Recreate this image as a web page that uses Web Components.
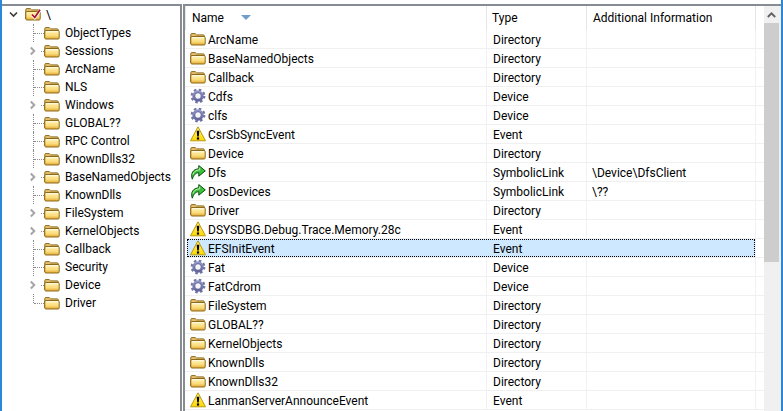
<!DOCTYPE html>
<html><head><meta charset="utf-8"><style>
html,body{margin:0;padding:0;background:#fff}
body{width:783px;height:411px;overflow:hidden;font:12px Roboto,"Open Sans",sans-serif;color:#000}
</style></head><body>
<x-app></x-app>
<script>
const folderBody=(id)=>`<defs><linearGradient id="${id}" x1="0" y1="0" x2="0" y2="1"><stop offset="0" stop-color="#fff3b8"/><stop offset=".6" stop-color="#fbdc7c"/><stop offset="1" stop-color="#e2a832"/></linearGradient></defs>`;
const ICONS={
folder:`<svg width="16" height="16" viewBox="0 0 16 16">${folderBody('fg')}<path d="M.8 13V3.600q0-1 1-1h3.400l1.300 1.300h6.800q1 0 1 1V6.500H.8z" fill="#e6c070" stroke="#8c6a1a"/><rect x=".8" y="5.500" width="14.400" height="8.500" rx="1.200" fill="url(#fg)" stroke="#8c6a1a"/><path d="M2 6.700h12" stroke="#fffbe6"/></svg>`,
gear:`<svg width="16" height="16" viewBox="0 0 16 16"><defs><linearGradient id="gg" x1="0" y1="0" x2="0" y2="1"><stop offset="0" stop-color="#9a9dca"/><stop offset="1" stop-color="#5c6098"/></linearGradient></defs><circle cx="8" cy="8" r="6.200" fill="none" stroke="#7175aa" stroke-width="2.400" stroke-dasharray="2.500 2.370"/><circle cx="8" cy="8" r="5.700" fill="url(#gg)"/><circle cx="8" cy="8" r="3.300" fill="#f4f4fa" stroke="#4f5388" stroke-width=".8"/></svg>`,
warn:`<svg width="16" height="16" viewBox="0 0 16 16"><defs><linearGradient id="wg" x1="0" y1="0" x2="0" y2="1"><stop offset="0" stop-color="#fff27a"/><stop offset="1" stop-color="#ffd800"/></linearGradient></defs><path d="M8 .8L15.500 14.800H.5z" fill="url(#wg)" stroke="#b89a10" stroke-linejoin="round"/><path d="M6.700 4.800h2.600l-.5 5.800H7.200z" fill="#000"/><rect x="6.900" y="11.400" width="2.200" height="2.200" fill="#000"/></svg>`,
link:`<svg width="16" height="16" viewBox="0 0 16 16"><path d="M2.300 15.200C.3 9.500 3 5.200 8.800 4.800V1.600l6.500 5.300-6.500 5.300V8.700C5.600 8.700 3.700 11 2.300 15.200z" fill="#3cc03c" stroke="#0a4f10" stroke-linejoin="round"/><path d="M2.900 10.500C3.600 7.800 6 5.900 9.700 5.800V3.600" fill="none" stroke="#c4f5b0" stroke-width="1"/></svg>`,
root:`<svg width="18" height="16" viewBox="0 0 18 16">${folderBody('rg')}<path d="M.8 12V2.600q0-1 1-1h3.400l1.300 1.300h6.800q1 0 1 1V5.500H.8z" fill="#e6c070" stroke="#8c6a1a"/><rect x=".8" y="4.500" width="14.400" height="8.500" rx="1.200" fill="url(#rg)" stroke="#8c6a1a"/><path d="M7 8L9.800 11 15 3.200" fill="none" stroke="#fff" stroke-width="2.600"/><path d="M7 7.500L9.800 10.500 15 2.800" fill="none" stroke="#a80f2c" stroke-width="1.700"/></svg>`
};
class XIcon extends HTMLElement{connectedCallback(){
 const s=this.shadowRoot||this.attachShadow({mode:'open'});
 s.innerHTML=`<style>:host{display:inline-flex;flex:none}svg{display:block}</style>`+ICONS[this.getAttribute('name')];
}}
customElements.define('x-icon',XIcon);

const ttpl=document.createElement('template');
ttpl.innerHTML=`<style>
:host{display:flex;align-items:center;height:18px;position:relative;white-space:nowrap}
.arrow{width:12px;height:18px;margin-left:27px;flex:none;display:flex;align-items:center;justify-content:flex-start}
.v{position:absolute;left:31px;top:0;bottom:0;border-left:1px dotted #8a8a8a}
:host([last]) .v{bottom:9px}
.h{position:absolute;left:32px;width:10px;top:9px;border-top:1px dotted #8a8a8a}
svg{display:none;position:relative;background:#fff}
:host([expandable]) svg{display:block}
x-icon{margin-left:3px;position:relative}
span{margin-left:5px}
</style><i class="v"></i><i class="h"></i><div class="arrow"><svg width="12" height="18" viewBox="0 0 12 18"><path d="M1.800 5.500L5.300 9 1.800 12.500" fill="none" stroke="#a6a6a6" stroke-width="2"/></svg></div><x-icon name="folder"></x-icon><span><slot></slot></span>`;
class XTreeRow extends HTMLElement{constructor(){super();this.attachShadow({mode:'open'}).append(ttpl.content.cloneNode(true))}}
customElements.define('x-tree-row',XTreeRow);

const rtpl=document.createElement('template');
rtpl.innerHTML=`<style>
:host{display:grid;grid-template-columns:301px 100px 169px 8px;height:19px;box-sizing:border-box;border-bottom:1px solid #f0f0f0;white-space:nowrap;position:relative}
div{display:flex;align-items:center;min-width:0;height:18px;overflow:hidden;position:relative;box-sizing:border-box}
.n{padding-left:5px}
.n span{margin-left:2px;padding-top:2px}
.t,.a{padding-left:6px;padding-top:2px;border-left:1px solid #f0f0f5}
.a{padding-left:5px}
.e{border-left:1px solid #f0f0f5}
.w{display:none}
:host([sel]) .t,:host([sel]) .a{border-left-color:transparent}
:host([sel]) .w{display:block;position:absolute;left:2px;top:0;width:568px;height:18px;box-sizing:border-box;background:#cde8ff;border:1px dotted #000}
</style><i class="w"></i><div class="n"><x-icon></x-icon><span></span></div><div class="t"></div><div class="a"></div><div class="e"></div>`;
class XRow extends HTMLElement{constructor(){super();this.attachShadow({mode:'open'}).append(rtpl.content.cloneNode(true))}
 connectedCallback(){const r=this.shadowRoot;const g=n=>this.getAttribute(n)||'';
  const ic=r.querySelector('x-icon');ic.setAttribute('name',{Directory:'folder',Device:'gear',Event:'warn',SymbolicLink:'link'}[g('type')]);
  ic.connectedCallback();
  r.querySelector('.n span').textContent=g('name');r.querySelector('.t').textContent=g('type');r.querySelector('.a').textContent=g('info');}}
customElements.define('x-row',XRow);

class XScroll extends HTMLElement{constructor(){super();this.attachShadow({mode:'open'}).innerHTML=`<style>
:host{display:flex;flex-direction:column;width:15px;padding-right:2px;background:#f0f0f0;flex:none;height:100%}
.b{height:17px;display:flex;align-items:center;justify-content:center;flex:none}
.t{height:239px;background:#cdcdcd;flex:none}
</style><div class="b"><svg width="9" height="6" viewBox="0 0 9 6"><path d="M.8 5L4.500 1.300 8.200 5" fill="none" stroke="#606060" stroke-width="1.800"/></svg></div><div class="t"></div>`}}
customElements.define('x-scroll',XScroll);

class XHeader extends HTMLElement{constructor(){super();this.attachShadow({mode:'open'}).innerHTML=`<style>
:host{display:grid;grid-template-columns:301px 100px 169px 1fr;height:24px;flex:none;white-space:nowrap}
div{display:flex;align-items:center;padding-left:6px;border-left:1px solid #e5e5e5;min-width:0;height:24px;box-sizing:border-box}
div:first-child{border:0;padding-left:7px}
div:nth-child(3){padding-left:5px}
svg{margin-left:17px;margin-top:-1px}
</style><div>Name<svg width="10" height="6" viewBox="0 0 10 6"><path d="M0 0H10L5 5z" fill="#6f9fc8"/></svg></div><div>Type</div><div>Additional Information</div><div></div>`}}
customElements.define('x-header',XHeader);

const tree=[['ObjectTypes'],['Sessions',1],['ArcName'],['NLS'],['Windows',1],['GLOBAL??'],['RPC Control'],['KnownDlls32'],['BaseNamedObjects',1],['KnownDlls'],['FileSystem',1],['KernelObjects',1],['Callback'],['Security'],['Device',1],['Driver']];
const rows=[['ArcName','Directory'],['BaseNamedObjects','Directory'],['Callback','Directory'],['Cdfs','Device'],['clfs','Device'],['CsrSbSyncEvent','Event'],['Device','Directory'],['Dfs','SymbolicLink','\\Device\\DfsClient'],['DosDevices','SymbolicLink','\\??'],['Driver','Directory'],['DSYSDBG.Debug.Trace.Memory.28c','Event'],['EFSInitEvent','Event','',1],['Fat','Device'],['FatCdrom','Device'],['FileSystem','Directory'],['GLOBAL??','Directory'],['KernelObjects','Directory'],['KnownDlls','Directory'],['KnownDlls32','Directory'],['LanmanServerAnnounceEvent','Event']];
const esc=s=>s.replace(/&/g,'&amp;').replace(/"/g,'&quot;');
class XApp extends HTMLElement{constructor(){super();this.attachShadow({mode:'open'}).innerHTML=`<style>
:host{display:flex;width:783px;height:411px;box-sizing:border-box;padding-top:4px;border-left:2px solid #2b88d8;border-right:2px solid #2b88d8;background:#fff;overflow:hidden}
.tree{width:178px;border-top:2px solid #868c92;border-right:2px solid #868c92;flex:none;height:405px}
.root{display:flex;align-items:center;height:18px;padding-left:7px}
.root span{margin-left:3px}
.list{flex:1;margin-left:1px;border-top:2px solid #868c92;border-left:2px solid #868c92;display:flex;min-width:0;height:405px;overflow:hidden}
.main{flex:1;display:flex;flex-direction:column;min-width:0}
</style><div class="tree"><div class="root"><svg width="10" height="8" viewBox="0 0 10 8" style="margin-right:6px"><path d="M1 1.500L4.500 5 8 1.500" fill="none" stroke="#404040" stroke-width="1.700"/></svg><x-icon name="root"></x-icon><span>\\</span></div>
${tree.map((t,i)=>`<x-tree-row ${t[1]?'expandable':''} ${i==tree.length-1?'last':''}>${esc(t[0])}</x-tree-row>`).join('')}</div>
<div class="list"><div class="main"><x-header></x-header>${rows.map(r=>`<x-row name="${esc(r[0])}" type="${r[1]}" info="${esc(r[2]||'')}" ${r[3]?'sel':''}></x-row>`).join('')}</div><x-scroll></x-scroll></div>`}}
customElements.define('x-app',XApp);
</script></body></html>
